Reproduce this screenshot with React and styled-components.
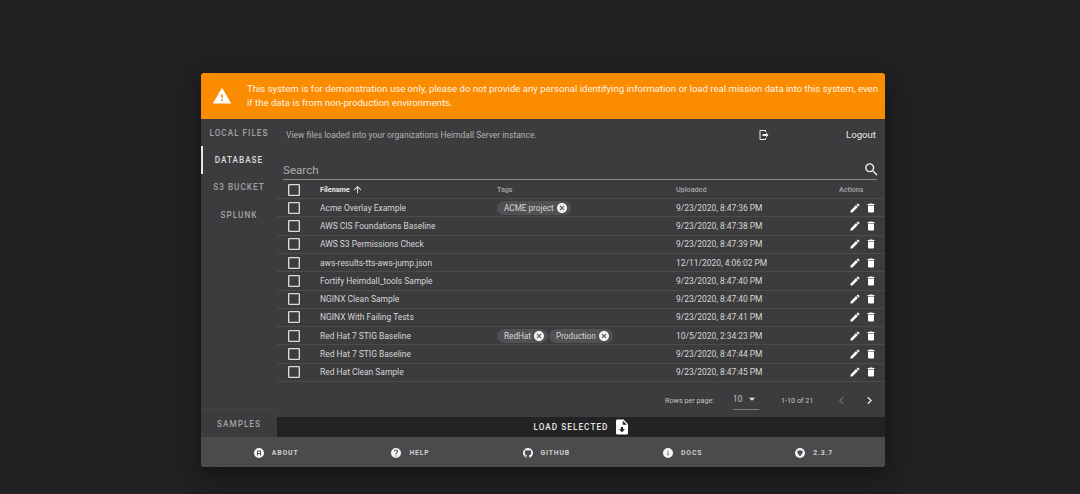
import React from 'react';
import styled, { createGlobalStyle } from 'styled-components';

const P = {
  alert: 'M13 14H11V10H13M13 18H11V16H13M1 21H23L12 2L1 21Z',
  logout: 'M16,17V14H9V10H16V7L21,12L16,17M14,2A2,2 0 0,1 16,4V6H14V4H5V20H14V18H16V20A2,2 0 0,1 14,22H5A2,2 0 0,1 3,20V4A2,2 0 0,1 5,2H14Z',
  magnify: 'M9.5,3A6.5,6.5 0 0,1 16,9.5C16,11.11 15.41,12.59 14.44,13.73L14.71,14H15.5L20.5,19L19,20.5L14,15.5V14.71L13.73,14.44C12.59,15.41 11.11,16 9.5,16A6.5,6.5 0 0,1 3,9.5A6.5,6.5 0 0,1 9.5,3M9.5,5C7,5 5,7 5,9.5C5,12 7,14 9.5,14C12,14 14,12 14,9.5C14,7 12,5 9.5,5Z',
  pencil: 'M20.71,7.04C21.1,6.65 21.1,6 20.71,5.63L18.37,3.29C18,2.9 17.35,2.9 16.96,3.29L15.12,5.12L18.87,8.87M3,17.25V21H6.75L17.81,9.93L14.06,6.18L3,17.25Z',
  trash: 'M19,4H15.5L14.5,3H9.5L8.5,4H5V6H19M6,19A2,2 0 0,0 8,21H16A2,2 0 0,0 18,19V7H6V19Z',
  box: 'M19,3H5C3.89,3 3,3.89 3,5V19A2,2 0 0,0 5,21H19A2,2 0 0,0 21,19V5C21,3.89 20.1,3 19,3M19,5V19H5V5H19Z',
  up: 'M13,20H11V8L5.5,13.5L4.08,12.08L12,4.16L19.92,12.08L18.5,13.5L13,8V20Z',
  close: 'M12,2C17.53,2 22,6.47 22,12C22,17.53 17.53,22 12,22C6.47,22 2,17.53 2,12C2,6.47 6.47,2 12,2M15.59,7L12,10.59L8.41,7L7,8.41L10.59,12L7,15.59L8.41,17L12,13.41L15.59,17L17,15.59L13.41,12L17,8.41L15.59,7Z',
  down: 'M7,10L12,15L17,10H7Z',
  left: 'M15.41,16.58L10.83,12L15.41,7.41L14,6L8,12L14,18L15.41,16.58Z',
  right: 'M8.59,16.58L13.17,12L8.59,7.41L10,6L16,12L10,18L8.59,16.58Z',
  file: 'M14,2H6C4.89,2 4,2.89 4,4V20A2,2 0 0,0 6,22H18A2,2 0 0,0 20,20V8L14,2M12,19L8,15H10.5V12H13.5V15H16L12,19M13,9V3.5L18.5,9H13Z',
  help: 'M15.07,11.25L14.17,12.17C13.45,12.89 13,13.5 13,15H11V14.5C11,13.39 11.45,12.39 12.17,11.67L13.41,10.41C13.78,10.05 14,9.55 14,9C14,7.89 13.1,7 12,7A2,2 0 0,0 10,9H8A4,4 0 0,1 12,5A4,4 0 0,1 16,9C16,9.88 15.64,10.67 15.07,11.25M13,19H11V17H13M12,2A10,10 0 0,0 2,12A10,10 0 0,0 12,22A10,10 0 0,0 22,12C22,6.47 17.5,2 12,2Z',
  github: 'M12,2A10,10 0 0,0 2,12C2,16.42 4.87,20.17 8.84,21.5C9.34,21.58 9.5,21.27 9.5,21C9.5,20.77 9.5,20.14 9.5,19.31C6.73,19.91 6.14,17.97 6.14,17.97C5.68,16.81 5.03,16.5 5.03,16.5C4.12,15.88 5.1,15.9 5.1,15.9C6.1,15.97 6.63,16.93 6.63,16.93C7.5,18.45 8.97,18 9.54,17.76C9.63,17.11 9.89,16.67 10.17,16.42C7.95,16.17 5.62,15.31 5.62,11.5C5.62,10.39 6,9.5 6.65,8.79C6.55,8.54 6.2,7.5 6.75,6.15C6.75,6.15 7.59,5.88 9.5,7.17C10.29,6.95 11.15,6.84 12,6.84C12.85,6.84 13.71,6.95 14.5,7.17C16.41,5.88 17.25,6.15 17.25,6.15C17.8,7.5 17.45,8.54 17.35,8.79C18,9.5 18.38,10.39 18.38,11.5C18.38,15.32 16.04,16.16 13.81,16.41C14.17,16.72 14.5,17.33 14.5,18.26C14.5,19.6 14.5,20.68 14.5,21C14.5,21.27 14.66,21.59 15.17,21.5C19.14,20.16 22,16.42 22,12A10,10 0 0,0 12,2Z',
  info: 'M13,9H11V7H13M13,17H11V11H13M12,2A10,10 0 0,0 2,12A10,10 0 0,0 12,22A10,10 0 0,0 22,12A10,10 0 0,0 12,2Z',
  about: 'M12,2A10,10 0 0,0 2,12A10,10 0 0,0 12,22A10,10 0 0,0 22,12A10,10 0 0,0 12,2M10,7H14A2,2 0 0,1 16,9V17H14V14H10V17H8V9A2,2 0 0,1 10,7M10,9V12H14V9H10Z',
  version: 'M12,2A10,10 0 0,0 2,12A10,10 0 0,0 12,22A10,10 0 0,0 22,12A10,10 0 0,0 12,2M7,7H17V11C17,13.5 15,15 13.5,15.5V18H10.5V15.5C9,15 7,13.5 7,11V7Z',
};

const Svg = styled.svg`
  width: ${(p) => p.$size}px;
  height: ${(p) => p.$size}px;
  flex: none;
  display: block;
  fill: ${(p) => p.$color || '#fff'};
`;
const Icon = ({ name, size = 12, color }) => (
  <Svg viewBox="0 0 24 24" $size={size} $color={color}><path d={P[name]} /></Svg>
);

const Global = createGlobalStyle`
  html, body { margin: 0; padding: 0; background: #212022; }
  body { font-family: Roboto, "Liberation Sans", sans-serif; overflow: hidden; }
`;

const Page = styled.div`
  width: 1080px;
  height: 494px;
  box-sizing: border-box;
  padding: 73px 0 0 201px;
`;
const Dialog = styled.div`
  width: 684px;
  height: 394px;
  display: flex;
  flex-direction: column;
  border-radius: 3px;
  overflow: hidden;
  background: #3c3b3e;
  box-shadow: 0 8px 24px rgba(0, 0, 0, 0.45);
`;
const Banner = styled.div`
  height: 46px;
  flex: none;
  background: #fb8c00;
  color: #fdf3e6;
  display: flex;
  align-items: center;
  padding: 0 5px 0 11px;
  gap: 15px;
  font-size: 9.6px;
  line-height: 14px;
  box-sizing: border-box;
`;
const Main = styled.div`
  flex: 1;
  display: flex;
  min-height: 0;
`;
const Side = styled.nav`
  width: 76px;
  flex: none;
  display: flex;
  flex-direction: column;
`;
const Tab = styled.div`
  height: 27.4px;
  display: flex;
  align-items: center;
  justify-content: center;
  font-size: 8.2px;
  font-weight: 500;
  letter-spacing: 1px;
  white-space: nowrap;
  color: ${(p) => (p.$active ? '#dedede' : '#a3a3a4')};
  border-left: 2px solid ${(p) => (p.$active ? '#e6e6e6' : 'transparent')};
  box-sizing: border-box;
  padding-right: 2px;
`;
const SideSpacer = styled.div`
  flex: 1;
`;
const SampleTab = styled(Tab)`
  border-top: 1px solid #454447;
  height: 28px;
`;
const Content = styled.div`
  flex: 1;
  display: flex;
  flex-direction: column;
  min-width: 0;
`;
const TopRow = styled.div`
  height: 31px;
  flex: none;
  display: flex;
  align-items: center;
  padding: 0 9px;
  font-size: 8.5px;
  color: #b2b2b3;
`;
const Hint = styled.span`
  flex: 1;
`;
const LogoutBtn = styled.div`
  display: flex;
  align-items: center;
  color: #e8e8e8;
  font-size: 9.6px;
  gap: 76px;
`;
const SearchRow = styled.div`
  margin: 5px 8px 0 6px;
  height: 25px;
  box-sizing: border-box;
  border-bottom: 1px solid #8a898b;
  display: flex;
  align-items: flex-end;
  justify-content: space-between;
  padding-bottom: 1px;
  font-size: 11.6px;
  color: #ababac;
`;
const SearchLabel = styled.span`
  padding-bottom: 1px;
`;
const SearchIcon = styled.span`
  display: block;
  margin-right: -3px;
`;
const Table = styled.div`
  display: flex;
  flex-direction: column;
  padding-top: 1.5px;
`;
const Row = styled.div`
  display: grid;
  grid-template-columns: 43px 177px 179px 1fr 50px;
  align-items: center;
  height: 18.3px;
  box-sizing: border-box;
  border-bottom: 1px solid #4c4b4e;
  font-size: 8.45px;
  color: #d6d6d6;
`;
const HeadRow = styled(Row)`
  height: 18px;
  font-size: 7.2px;
  font-weight: 500;
  color: #a8a8a9;
`;
const CheckCell = styled.div`
  display: flex;
  padding-left: 9px;
`;
const NameHead = styled.div`
  display: flex;
  align-items: center;
  gap: 2px;
  font-weight: 700;
  color: #e8e8e8;
`;
const Tags = styled.div`
  display: flex;
  gap: 1px;
`;
const Chip = styled.span`
  height: 14px;
  border-radius: 7px;
  background: #515053;
  padding: 0 3px 0 7px;
  display: flex;
  align-items: center;
  gap: 2px;
  color: #d6d6d6;
  font-size: 8.2px;
`;
const Actions = styled.div`
  display: flex;
  align-items: center;
  gap: 4px;
  justify-content: flex-end;
  padding-right: 8px;
`;
const ActionsHead = styled.div`
  margin-left: 4px;
  white-space: nowrap;
`;
const Pager = styled.div`
  height: 35px;
  flex: none;
  box-sizing: border-box;
  padding: 1px 0 0 388px;
  display: flex;
  align-items: center;
  font-size: 7.2px;
  white-space: nowrap;
  color: #c4c4c4;
`;
const PerPage = styled.div`
  width: 26px;
  flex: none;
  margin: 0 22px 0 19px;
  height: 19px;
  box-sizing: border-box;
  border-bottom: 1px solid #7c7b7d;
  display: flex;
  align-items: center;
  gap: 3px;
  font-size: 8.2px;
  padding-bottom: 1px;
`;
const PageText = styled.span`
  font-size: 7.2px;
  margin-right: 21px;
`;
const PageBtns = styled.div`
  display: flex;
  gap: 13px;
`;
const LoadBar = styled.div`
  height: 20px;
  flex: none;
  margin-top: auto;
  background: #232224;
  display: flex;
  align-items: center;
  justify-content: center;
  gap: 4px;
  padding-left: 2px;
  color: #e8e8e8;
  font-size: 8.2px;
  font-weight: 500;
  letter-spacing: 1.05px;
`;
const Footer = styled.div`
  height: 30px;
  flex: none;
  box-sizing: border-box;
  padding-top: 1px;
  background: #4b4a4c;
  display: flex;
  justify-content: center;
  gap: 92px;
`;
const FootItem = styled.div`
  display: flex;
  align-items: center;
  gap: 7px;
  font-size: 6.9px;
  font-weight: 700;
  letter-spacing: 0.8px;
  color: #cfcfcf;
`;

const rows = [
  ['Acme Overlay Example', ['ACME project'], '9/23/2020, 8:47:36 PM'],
  ['AWS CIS Foundations Baseline', [], '9/23/2020, 8:47:38 PM'],
  ['AWS S3 Permissions Check', [], '9/23/2020, 8:47:39 PM'],
  ['aws-results-tts-aws-jump.json', [], '12/11/2020, 4:06:02 PM'],
  ['Fortify Heimdall_tools Sample', [], '9/23/2020, 8:47:40 PM'],
  ['NGINX Clean Sample', [], '9/23/2020, 8:47:40 PM'],
  ['NGINX With Failing Tests', [], '9/23/2020, 8:47:41 PM'],
  ['Red Hat 7 STIG Baseline', ['RedHat', 'Production'], '10/5/2020, 2:34:23 PM'],
  ['Red Hat 7 STIG Baseline', [], '9/23/2020, 8:47:44 PM'],
  ['Red Hat Clean Sample', [], '9/23/2020, 8:47:45 PM'],
];
const foot = [['about', 'ABOUT'], ['help', 'HELP'], ['github', 'GITHUB'], ['info', 'DOCS'], ['version', '2.3.7']];

export default function App() {
  return (
    <Page>
      <Global />
      <Dialog>
        <Banner>
          <Icon name="alert" size={20} />
          <span>This system is for demonstration use only, please do not provide any personal identifying information or load real mission data into this system, even if the data is from non-production environments.</span>
        </Banner>
        <Main>
          <Side>
            <Tab>LOCAL FILES</Tab>
            <Tab $active>DATABASE</Tab>
            <Tab>S3 BUCKET</Tab>
            <Tab>SPLUNK</Tab>
            <SideSpacer />
            <SampleTab>SAMPLES</SampleTab>
          </Side>
          <Content>
            <TopRow>
              <Hint>View files loaded into your organizations Heimdall Server instance.</Hint>
              <LogoutBtn><Icon name="logout" size={12} color="#eee" /><span>Logout</span></LogoutBtn>
            </TopRow>
            <SearchRow>
              <SearchLabel>Search</SearchLabel>
              <SearchIcon><Icon name="magnify" size={17} color="#eee" /></SearchIcon>
            </SearchRow>
            <Table>
              <HeadRow>
                <CheckCell><Icon name="box" size={16} color="#dcdcdc" /></CheckCell>
                <NameHead>Filename <Icon name="up" size={11} color="#eee" /></NameHead>
                <div>Tags</div>
                <div>Uploaded</div>
                <ActionsHead>Actions</ActionsHead>
              </HeadRow>
              {rows.map(([name, tags, date], i) => (
                <Row key={i}>
                  <CheckCell><Icon name="box" size={16} color="#dcdcdc" /></CheckCell>
                  <div>{name}</div>
                  <Tags>
                    {tags.map((t) => (
                      <Chip key={t}>{t}<Icon name="close" size={12} color="#f4f4f4" /></Chip>
                    ))}
                  </Tags>
                  <div>{date}</div>
                  <Actions>
                    <Icon name="pencil" size={12} />
                    <Icon name="trash" size={12} />
                  </Actions>
                </Row>
              ))}
            </Table>
            <Pager>
              <span>Rows per page:</span>
              <PerPage>10 <Icon name="down" size={14} color="#eee" /></PerPage>
              <PageText>1-10 of 21</PageText>
              <PageBtns>
                <Icon name="left" size={15} color="#6f6e71" />
                <Icon name="right" size={15} color="#eee" />
              </PageBtns>
            </Pager>
            <LoadBar>LOAD SELECTED <Icon name="file" size={18} /></LoadBar>
          </Content>
        </Main>
        <Footer>
          {foot.map(([ic, label]) => (
            <FootItem key={label}><Icon name={ic} size={12} color="#f5f5f5" />{label}</FootItem>
          ))}
        </Footer>
      </Dialog>
    </Page>
  );
}
